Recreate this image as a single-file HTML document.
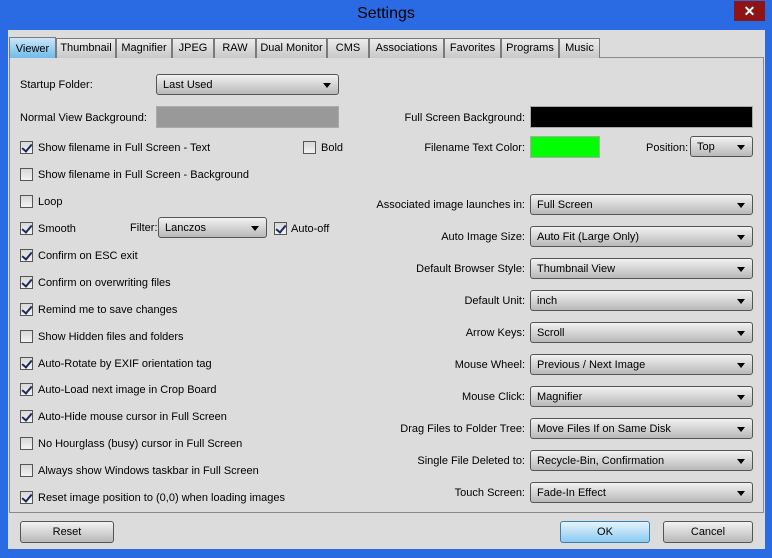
<!DOCTYPE html>
<html><head><style>
*{box-sizing:border-box;margin:0;padding:0}
body{width:772px;height:558px;background:#2a6ae2;font-family:"Liberation Sans",sans-serif;font-size:11px;color:#000;position:relative;overflow:hidden}
.title{position:absolute;left:0;top:5px;width:772px;text-align:center;font-size:16px;color:#000}
.close{position:absolute;left:734px;top:1px;width:31px;height:20px;background:#8f1414;color:#fff;text-align:center;font-size:14px;line-height:20px;font-weight:bold}
.client{position:absolute;left:8px;top:30px;width:757px;height:519px;background:#dcdcdc}
.panel{position:absolute;left:9px;top:57px;width:755px;height:456px;border:1px solid #8a8a8a;background:#dcdcdc}
.tab{position:absolute;top:38px;height:20px;border:1px solid #7a7a7a;border-bottom:none;background:linear-gradient(#ececec,#c8c8c8);text-align:center;line-height:19px;font-size:11px}
.tab.a{background:linear-gradient(#cde6f8,#6fbbea);top:37px;height:21px;line-height:20px}
.a{position:absolute;white-space:nowrap;padding-top:1px}
.cb{position:absolute;width:13px;height:13px;border:1px solid #555;background:linear-gradient(#d8d8d8,#f2f2f2)}
.cb.c::after{content:"";position:absolute;left:3px;top:0px;width:4px;height:8px;border:solid #1b2a5a;border-width:0 2px 2px 0;transform:rotate(40deg)}
.dd{position:absolute;height:21px;border:1px solid #555;border-radius:3px;background:linear-gradient(#f2f2f2,#b8b8b8);padding-left:6px;line-height:20px}
.dd::after{content:"";position:absolute;right:7px;top:8px;border:4px solid transparent;border-top:5px solid #000;border-bottom:none}
.r{text-align:right}
.btn{position:absolute;top:521px;height:22px;border:1px solid #555;border-radius:3px;background:linear-gradient(#f2f2f2,#b8b8b8);text-align:center;line-height:21px}
</style></head><body>
<div class="title">Settings</div>
<div class="close">✕</div>
<div class="client"></div>
<div class="panel"></div>
<div class="tab a" style="left:9px;width:47px">Viewer</div>
<div class="tab" style="left:56px;width:60px">Thumbnail</div>
<div class="tab" style="left:116px;width:56px">Magnifier</div>
<div class="tab" style="left:172px;width:42px">JPEG</div>
<div class="tab" style="left:214px;width:42px">RAW</div>
<div class="tab" style="left:256px;width:71px">Dual Monitor</div>
<div class="tab" style="left:327px;width:42px">CMS</div>
<div class="tab" style="left:369px;width:75px">Associations</div>
<div class="tab" style="left:444px;width:57px">Favorites</div>
<div class="tab" style="left:501px;width:58px">Programs</div>
<div class="tab" style="left:559px;width:41px">Music</div>

<div class="a" style="left:20px;top:78px">Startup Folder:</div>
<div class="dd" style="left:156px;top:74px;width:183px">Last Used</div>
<div class="a" style="left:20px;top:111px">Normal View Background:</div>
<div class="a" style="left:156px;top:106px;width:183px;height:22px;background:#999;border:1px solid #aaa"></div>

<div class="cb c" style="left:20px;top:141px"></div><div class="a" style="left:38px;top:141px">Show filename in Full Screen - Text</div>
<div class="cb" style="left:303px;top:141px"></div><div class="a" style="left:321px;top:141px">Bold</div>
<div class="cb" style="left:20px;top:168px"></div><div class="a" style="left:38px;top:168px">Show filename in Full Screen - Background</div>
<div class="cb" style="left:20px;top:195px"></div><div class="a" style="left:38px;top:195px">Loop</div>
<div class="cb c" style="left:20px;top:222px"></div><div class="a" style="left:38px;top:222px">Smooth</div>
<div class="a" style="left:130px;top:221px">Filter:</div>
<div class="dd" style="left:158px;top:217px;width:109px">Lanczos</div>
<div class="cb c" style="left:274px;top:222px"></div><div class="a" style="left:291px;top:222px">Auto-off</div>
<div class="cb c" style="left:20px;top:249px"></div><div class="a" style="left:38px;top:249px">Confirm on ESC exit</div>
<div class="cb c" style="left:20px;top:276px"></div><div class="a" style="left:38px;top:276px">Confirm on overwriting files</div>
<div class="cb c" style="left:20px;top:303px"></div><div class="a" style="left:38px;top:303px">Remind me to save changes</div>
<div class="cb" style="left:20px;top:330px"></div><div class="a" style="left:38px;top:330px">Show Hidden files and folders</div>
<div class="cb c" style="left:20px;top:357px"></div><div class="a" style="left:38px;top:357px">Auto-Rotate by EXIF orientation tag</div>
<div class="cb c" style="left:20px;top:383px"></div><div class="a" style="left:38px;top:383px">Auto-Load next image in Crop Board</div>
<div class="cb c" style="left:20px;top:410px"></div><div class="a" style="left:38px;top:410px">Auto-Hide mouse cursor in Full Screen</div>
<div class="cb" style="left:20px;top:437px"></div><div class="a" style="left:38px;top:437px">No Hourglass (busy) cursor in Full Screen</div>
<div class="cb" style="left:20px;top:464px"></div><div class="a" style="left:38px;top:464px">Always show Windows taskbar in Full Screen</div>
<div class="cb c" style="left:20px;top:491px"></div><div class="a" style="left:38px;top:491px">Reset image position to (0,0) when loading images</div>

<div class="a r" style="left:324px;width:201px;top:111px">Full Screen Background:</div>
<div class="a" style="left:530px;top:106px;width:223px;height:22px;background:#000;border:1px solid #aaa"></div>
<div class="a r" style="left:324px;width:201px;top:141px">Filename Text Color:</div>
<div class="a" style="left:530px;top:136px;width:70px;height:22px;background:#00ff00;border:1px solid #aaa"></div>
<div class="a" style="left:646px;top:141px">Position:</div>
<div class="dd" style="left:690px;top:136px;width:63px">Top</div>

<div class="a r" style="left:300px;width:225px;top:198px">Associated image launches in:</div><div class="dd" style="left:530px;top:194px;width:223px">Full Screen</div>
<div class="a r" style="left:300px;width:225px;top:230px">Auto Image Size:</div><div class="dd" style="left:530px;top:226px;width:223px">Auto Fit (Large Only)</div>
<div class="a r" style="left:300px;width:225px;top:262px">Default Browser Style:</div><div class="dd" style="left:530px;top:258px;width:223px">Thumbnail View</div>
<div class="a r" style="left:300px;width:225px;top:294px">Default Unit:</div><div class="dd" style="left:530px;top:290px;width:223px">inch</div>
<div class="a r" style="left:300px;width:225px;top:326px">Arrow Keys:</div><div class="dd" style="left:530px;top:322px;width:223px">Scroll</div>
<div class="a r" style="left:300px;width:225px;top:358px">Mouse Wheel:</div><div class="dd" style="left:530px;top:354px;width:223px">Previous / Next Image</div>
<div class="a r" style="left:300px;width:225px;top:390px">Mouse Click:</div><div class="dd" style="left:530px;top:386px;width:223px">Magnifier</div>
<div class="a r" style="left:300px;width:225px;top:422px">Drag Files to Folder Tree:</div><div class="dd" style="left:530px;top:418px;width:223px">Move Files If on Same Disk</div>
<div class="a r" style="left:300px;width:225px;top:454px">Single File Deleted to:</div><div class="dd" style="left:530px;top:450px;width:223px">Recycle-Bin, Confirmation</div>
<div class="a r" style="left:300px;width:225px;top:486px">Touch Screen:</div><div class="dd" style="left:530px;top:482px;width:223px">Fade-In Effect</div>

<div class="btn" style="left:20px;width:94px">Reset</div>
<div class="btn" style="left:560px;width:90px;border-color:#3c7fb1;background:linear-gradient(#e5f4fc,#8ccbf0)">OK</div>
<div class="btn" style="left:663px;width:90px">Cancel</div>
</body></html>
